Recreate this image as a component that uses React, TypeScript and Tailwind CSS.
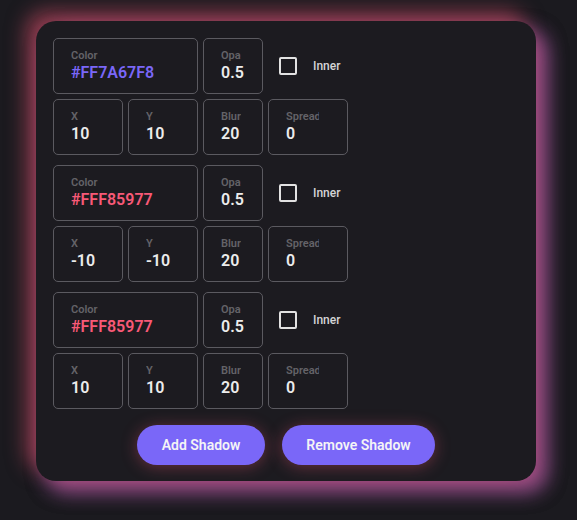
import React from "react";

type Shadow = {
  color: string;
  tint: string;
  opacity: string;
  x: string;
  y: string;
  blur: string;
  spread: string;
};

const shadows: Shadow[] = [
  { color: "#FF7A67F8", tint: "text-[#7a67f8]", opacity: "0.5", x: "10", y: "10", blur: "20", spread: "0" },
  { color: "#FFF85977", tint: "text-[#f85977]", opacity: "0.5", x: "-10", y: "-10", blur: "20", spread: "0" },
  { color: "#FFF85977", tint: "text-[#f85977]", opacity: "0.5", x: "10", y: "10", blur: "20", spread: "0" },
];

function Field({
  label,
  value,
  width,
  labelWidth = "max-w-full",
  valueClass = "text-[#ececec]",
}: {
  label: string;
  value: string;
  width: string;
  labelWidth?: string;
  valueClass?: string;
}) {
  return (
    <div
      className={`${width} h-[56px] shrink-0 rounded-[5px] border border-[#5b5a60] px-[17px] pt-[10px] overflow-hidden`}
    >
      {/* floating label gets clipped in the narrow boxes */}
      <div
        className={`${labelWidth} text-[11px] leading-[13px] font-semibold text-[#646368] whitespace-nowrap overflow-hidden`}
      >
        {label}
      </div>
      <div
        className={`mt-[1px] text-[16px] leading-[20px] font-semibold whitespace-nowrap overflow-hidden ${valueClass}`}
      >
        {value}
      </div>
    </div>
  );
}

function ShadowEditor({ shadow }: { shadow: Shadow }) {
  return (
    <div className="flex flex-col gap-[5px]">
      <div className="flex items-center gap-[5px]">
        <Field label="Color" value={shadow.color} width="w-[145px]" valueClass={shadow.tint} />
        <Field label="Opacity" value={shadow.opacity} width="w-[60px]" labelWidth="max-w-[20px]" />
        <div className="ml-[11px] flex items-center gap-4">
          <div className="w-[18px] h-[18px] rounded-[2px] border-2 border-[#e2e2e2]" />
          <span className="text-[12px] font-medium text-[#d4d4d6]">Inner</span>
        </div>
      </div>
      <div className="flex gap-[5px]">
        <Field label="X" value={shadow.x} width="w-[70px]" />
        <Field label="Y" value={shadow.y} width="w-[70px]" />
        <Field label="Blur" value={shadow.blur} width="w-[60px]" labelWidth="max-w-[20px]" />
        <Field label="Spread" value={shadow.spread} width="w-[80px]" labelWidth="max-w-[33px]" />
      </div>
    </div>
  );
}

export default function App() {
  return (
    <div
      className="min-h-[520px] bg-[#1b1a1f] pt-[21px] pl-[36px]"
      style={{ fontFamily: "Roboto, 'Noto Sans', sans-serif" }}
    >
      <div className="w-[500px] h-[460px] rounded-[20px] bg-[#1c1b20] pt-[17px] pb-4 px-[17px] flex flex-col shadow-[10px_10px_20px_rgba(248,89,119,0.5),-10px_-10px_20px_rgba(248,89,119,0.5),10px_10px_20px_rgba(122,103,248,0.5)]">
        <div className="flex flex-col gap-[10px]">
          {shadows.map((s, i) => (
            <ShadowEditor key={i} shadow={s} />
          ))}
        </div>
        <div className="mt-4 flex justify-center gap-[17px]">
          <button className="w-[128px] h-[40px] rounded-full bg-[#7a67f8] text-[14px] font-semibold text-[#f4f4f6] shadow-[0_2px_16px_rgba(248,89,119,0.35)]">
            Add Shadow
          </button>
          <button className="w-[153px] h-[40px] rounded-full bg-[#7a67f8] text-[14px] font-semibold text-[#f4f4f6] shadow-[0_2px_16px_rgba(248,89,119,0.35)]">
            Remove Shadow
          </button>
        </div>
      </div>
    </div>
  );
}
